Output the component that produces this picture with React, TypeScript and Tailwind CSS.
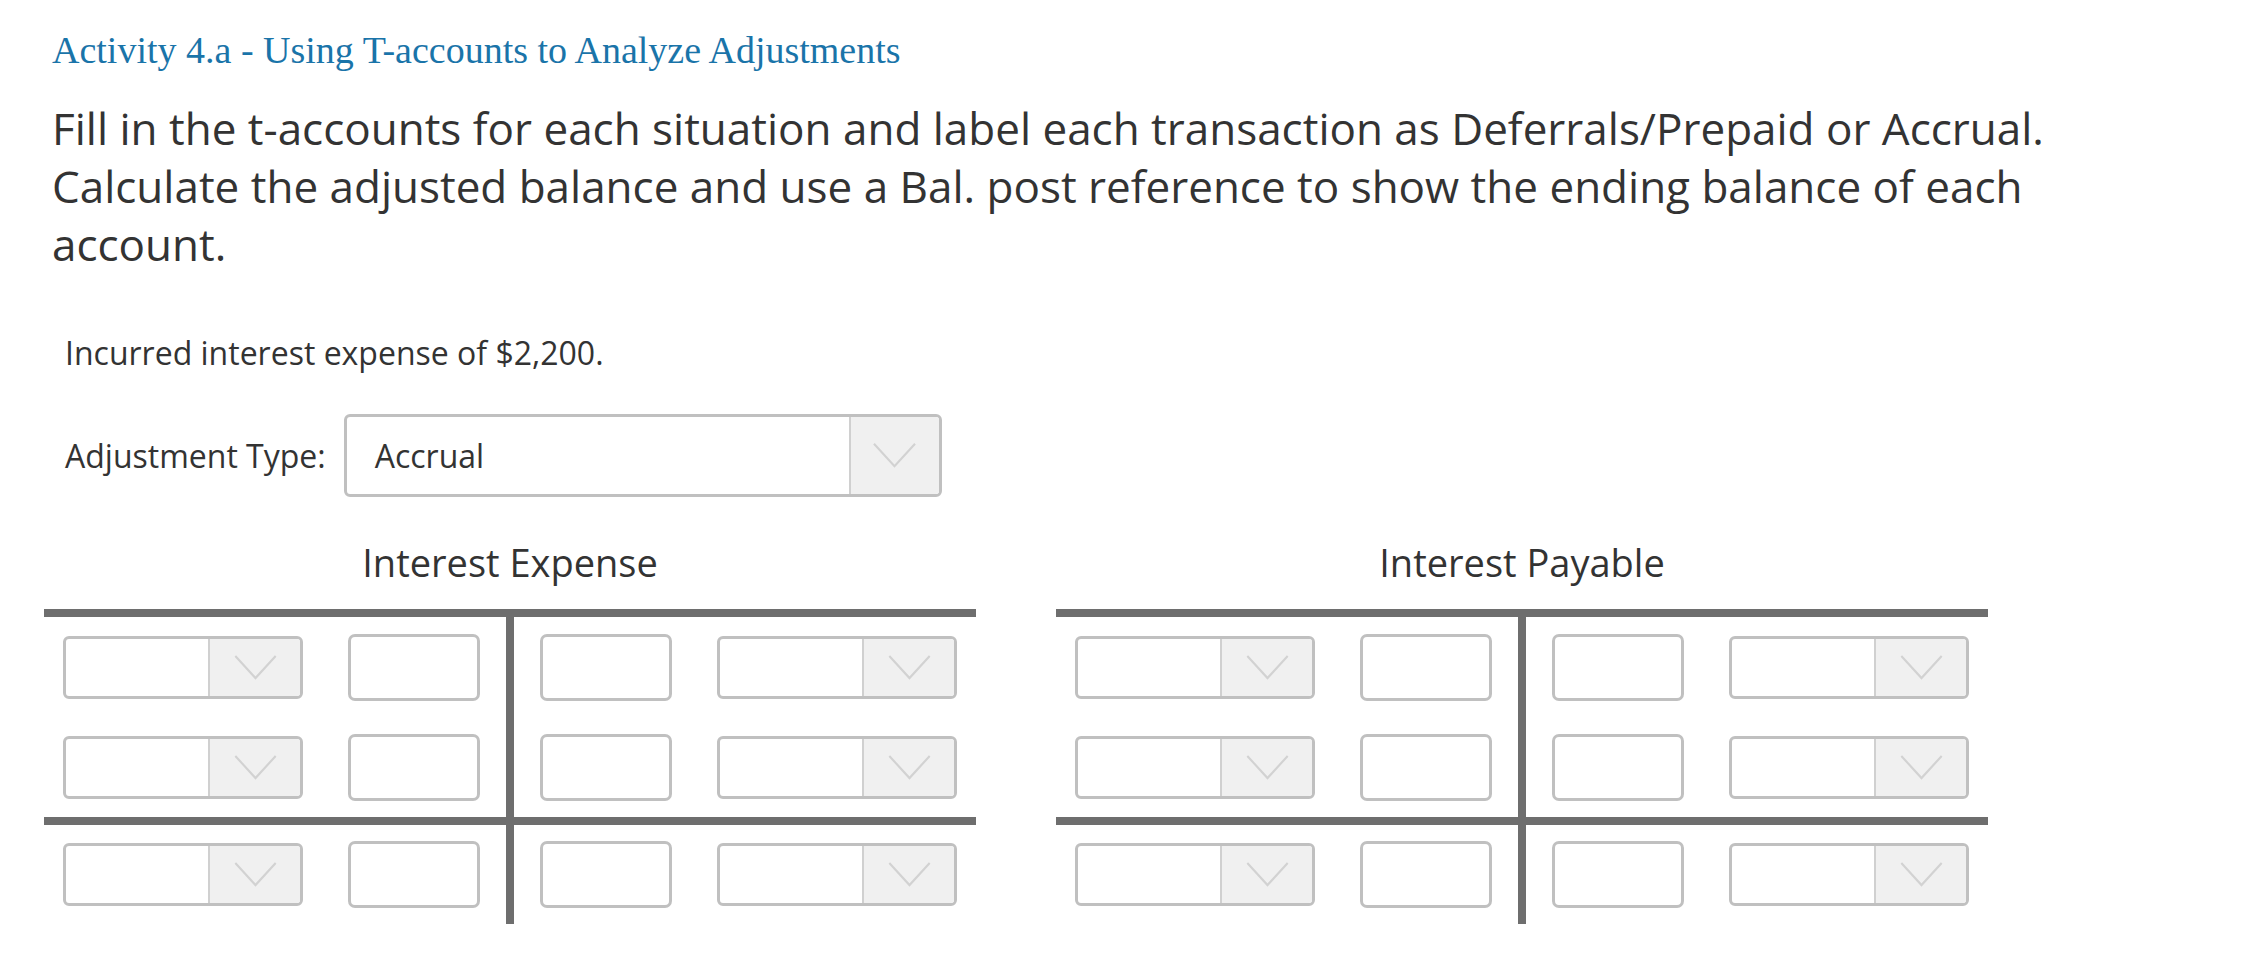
import React from "react";

const sans = "font-['Open_Sans',_'Noto_Sans',_sans-serif]";

function Chevron({ className = "" }: { className?: string }) {
  return (
    <svg viewBox="0 0 44 26" className={className} fill="none">
      <path d="M1 1 L22 24 L43 1" stroke="#d2d2d2" strokeWidth="2.2" />
    </svg>
  );
}

function SmallSelect() {
  return (
    <div className="flex h-[63px] w-[240px] overflow-hidden rounded-[6px] border-[3px] border-[#c0c0c0] bg-white">
      <div className="flex-1" />
      <div className="flex w-[92px] items-center justify-center border-l-[2px] border-[#d0d0d0] bg-[#f0f0f0]">
        <Chevron className="h-[25px] w-[43px]" />
      </div>
    </div>
  );
}

function Box() {
  return <div className="h-[67px] w-[132px] rounded-[7px] border-[3px] border-[#c0c0c0] bg-white" />;
}

function LeftCell() {
  return (
    <div className="flex items-center pl-[19px]">
      <SmallSelect />
      <div className="ml-[45px]">
        <Box />
      </div>
    </div>
  );
}

function RightCell() {
  return (
    <div className="flex items-center pl-[26px]">
      <Box />
      <div className="ml-[45px]">
        <SmallSelect />
      </div>
    </div>
  );
}

function Section({ rows, className }: { rows: number; className: string }) {
  const list = Array.from({ length: rows });
  return (
    <div className="flex">
      <div className={`flex w-[462px] flex-col gap-[33px] ${className}`}>
        {list.map((_, i) => (
          <LeftCell key={i} />
        ))}
      </div>
      <div className="w-[8px] bg-[#6e6e6e]" />
      <div className={`flex w-[462px] flex-col gap-[33px] ${className}`}>
        {list.map((_, i) => (
          <RightCell key={i} />
        ))}
      </div>
    </div>
  );
}

function TAccount({ title }: { title: string }) {
  return (
    <div className="w-[932px]">
      <div className={`${sans} text-center text-[38px] leading-[46px] text-[#333]`}>{title}</div>
      <div className="mt-[24px] h-[8px] bg-[#6e6e6e]" />
      <Section rows={2} className="pt-[17px] pb-[16px]" />
      <div className="h-[8px] bg-[#6e6e6e]" />
      <Section rows={1} className="pt-[16px] pb-[16px]" />
    </div>
  );
}

export default function App() {
  return (
    <div className="min-h-[970px] bg-white pl-[44px] pt-[30px]">
      <h1 className="ml-[8px] font-['Liberation_Serif',_serif] text-[38px] leading-[40px] font-normal text-[#1a74a9]">
        Activity 4.a - Using T-accounts to Analyze Adjustments
      </h1>
      <p className={`${sans} ml-[8px] mt-[29px] w-[2080px] text-[44px] leading-[58px] text-[#333]`}>
        Fill in the t-accounts for each situation and label each transaction as Deferrals/Prepaid or Accrual.
        Calculate the adjusted balance and use a Bal. post reference to show the ending balance of each account.
      </p>
      <div className={`${sans} ml-[21px] mt-[58px] text-[32px] leading-[44px] text-[#333]`}>
        Incurred interest expense of $2,200.
      </div>
      <div className={`${sans} ml-[21px] mt-[39px] flex items-center text-[32px] leading-[44px] text-[#333]`}>
        <span>Adjustment Type:</span>
        <div className="ml-[18px] flex h-[83px] w-[598px] overflow-hidden rounded-[6px] border-[3px] border-[#c0c0c0] bg-white">
          <div className="flex flex-1 items-center pl-[28px]">Accrual</div>
          <div className="flex w-[90px] items-center justify-center border-l-[2px] border-[#d0d0d0] bg-[#f0f0f0]">
            <Chevron className="h-[27px] w-[43px]" />
          </div>
        </div>
      </div>
      <div className="mt-[42px] flex gap-[80px]">
        <TAccount title="Interest Expense" />
        <TAccount title="Interest Payable" />
      </div>
    </div>
  );
}
